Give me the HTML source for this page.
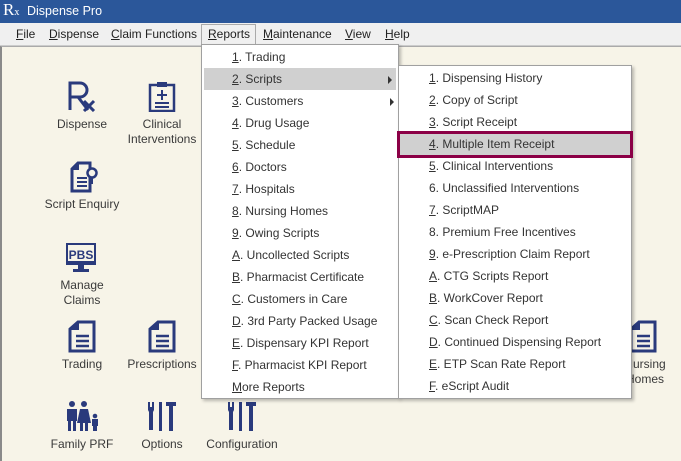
<!DOCTYPE html>
<html><head><style>
*{margin:0;padding:0;box-sizing:border-box}
body{width:681px;height:461px;overflow:hidden;background:#f7f4e8;font-family:"Liberation Sans",sans-serif;font-size:12px;color:#333;position:relative}
.title{position:absolute;left:0;top:0;width:681px;height:23px;background:#2b579a;color:#fff;font-size:12.5px}
.menubar{position:absolute;left:0;top:23px;width:681px;height:23px;background:#f0f0f0;border-bottom:1px solid #ccc}
.mi{position:absolute;top:4px;color:#222}
.content{position:absolute;left:0;top:46px;width:681px;height:415px;border-left:2px solid #8a8a8a;border-top:1px solid #aaa}
.lbl{position:absolute;text-align:center;color:#3a3a3a;line-height:15px;width:100px}
.ic{position:absolute}
.menu{position:absolute;background:#fff;border:1px solid #a0a0a0;box-shadow:2px 2px 3px rgba(0,0,0,.25)}
.it{position:absolute;left:0;height:22px;line-height:22px;color:#333}
.hl{background:#d0d0d0}
u{text-decoration:underline}
.arr{position:absolute;right:4px;top:8px;width:0;height:0;border-top:4px solid transparent;border-bottom:4px solid transparent;border-left:4px solid #333}
</style></head><body>
<div class="title"><span style="position:absolute;left:3px;top:0px;font-size:17px;font-family:'Liberation Serif',serif">R<span style="font-size:10px">x</span></span><span style="position:absolute;left:27px;top:4px">Dispense Pro</span></div>
<div class="menubar">
<span class="mi" style="left:16px"><u>F</u>ile</span>
<span class="mi" style="left:49px"><u>D</u>ispense</span>
<span class="mi" style="left:111px"><u>C</u>laim Functions</span>
<div style="position:absolute;left:201px;top:1px;width:55px;height:23px;border:1px solid #aaa;border-bottom:none;background:#f0f0f0"></div>
<span class="mi" style="left:208px"><u>R</u>eports</span>
<span class="mi" style="left:263px"><u>M</u>aintenance</span>
<span class="mi" style="left:345px"><u>V</u>iew</span>
<span class="mi" style="left:385px"><u>H</u>elp</span>
</div>
<div class="content"></div>

<!-- icons -->
<svg class="ic" style="left:66px;top:80px" width="34" height="32" viewBox="0 0 34 32"><path d="M4 30V3h10a7 7 0 0 1 0 14H4M12 17l10 13M18 21l10 10M28 21l-10 10" fill="none" stroke="#2a3a7c" stroke-width="3"/></svg>
<div class="lbl" style="left:32px;top:117px">Dispense</div>
<svg class="ic" style="left:148px;top:80px" width="28" height="32" viewBox="0 0 28 32"><rect x="2" y="5" width="24" height="26" fill="none" stroke="#2a3a7c" stroke-width="2.5"/><rect x="9" y="2" width="10" height="5" fill="#2a3a7c"/><path d="M14 10v10M9 15h10M7 23h14M7 27h14" stroke="#2a3a7c" stroke-width="2"/></svg>
<div class="lbl" style="left:112px;top:117px">Clinical<br>Interventions</div>
<svg class="ic" style="left:66px;top:161px" width="34" height="32" viewBox="0 0 34 32"><path d="M6 30V8l6-6h12v28z" fill="none" stroke="#2a3a7c" stroke-width="3"/><path d="M6 9h7V2z" fill="#2a3a7c"/><path d="M11 17h10M11 21h10M11 25h10" stroke="#2a3a7c" stroke-width="2"/><circle cx="26" cy="12" r="4.5" fill="#f7f4e8" stroke="#2a3a7c" stroke-width="2.5"/><path d="M26 17v6" stroke="#2a3a7c" stroke-width="2"/></svg>
<div class="lbl" style="left:32px;top:197px">Script Enquiry</div>
<svg class="ic" style="left:64px;top:241px" width="36" height="32" viewBox="0 0 36 32"><rect x="2" y="2" width="30" height="22" fill="#2a3a7c"/><rect x="4" y="4" width="26" height="16" fill="#f7f4e8"/><text x="17" y="18" font-family="Liberation Sans" font-size="12" font-weight="bold" fill="#2a3a7c" text-anchor="middle">PBS</text><rect x="14" y="24" width="6" height="4" fill="#2a3a7c"/><rect x="9" y="28" width="16" height="3" fill="#2a3a7c"/></svg>
<div class="lbl" style="left:32px;top:278px">Manage<br>Claims</div>
<svg class="ic" style="left:68px;top:320px" width="30" height="33" viewBox="0 0 30 33"><path d="M2 31V9l8-7h16v29z" fill="none" stroke="#2a3a7c" stroke-width="3"/><path d="M2 10h9V2z" fill="#2a3a7c"/><path d="M8 16h13M8 21h13M8 26h13" stroke="#2a3a7c" stroke-width="2.5"/></svg>
<div class="lbl" style="left:32px;top:357px">Trading</div>
<svg class="ic" style="left:148px;top:320px" width="30" height="33" viewBox="0 0 30 33"><path d="M2 31V9l8-7h16v29z" fill="none" stroke="#2a3a7c" stroke-width="3"/><path d="M2 10h9V2z" fill="#2a3a7c"/><path d="M8 16h13M8 21h13M8 26h13" stroke="#2a3a7c" stroke-width="2.5"/></svg>
<div class="lbl" style="left:112px;top:357px">Prescriptions</div>
<svg class="ic" style="left:629px;top:320px" width="30" height="33" viewBox="0 0 30 33"><path d="M2 31V9l8-7h16v29z" fill="none" stroke="#2a3a7c" stroke-width="3"/><path d="M2 10h9V2z" fill="#2a3a7c"/><path d="M8 16h13M8 21h13M8 26h13" stroke="#2a3a7c" stroke-width="2.5"/></svg>
<div class="lbl" style="left:595px;top:357px">Nursing<br>Homes</div>
<svg class="ic" style="left:64px;top:400px" width="36" height="32" viewBox="0 0 36 32"><g fill="#2a3a7c"><circle cx="8" cy="4" r="3"/><circle cx="20" cy="4" r="3"/><rect x="3" y="9" width="10" height="12"/><rect x="4" y="20" width="3" height="11"/><rect x="9" y="20" width="3" height="11"/><path d="M16 9h8l3 14h-14z"/><rect x="16" y="22" width="3" height="9"/><rect x="21" y="22" width="3" height="9"/><circle cx="31" cy="16" r="2.3"/><rect x="28" y="19" width="6" height="7"/><rect x="29" y="25" width="4" height="6"/></g></svg>
<div class="lbl" style="left:32px;top:437px">Family PRF</div>
<svg class="ic" style="left:146px;top:400px" width="32" height="32" viewBox="0 0 32 32"><g fill="#2a3a7c"><path d="M2 2h2v5h2V2h2v8l-1 2v18H3V12l-1-2z"/><rect x="13" y="2" width="3" height="29"/><path d="M20 2h10v4h-3v25h-4V6h-3z"/></g></svg>
<div class="lbl" style="left:112px;top:437px">Options</div>
<svg class="ic" style="left:226px;top:400px" width="32" height="32" viewBox="0 0 32 32"><g fill="#2a3a7c"><path d="M2 2h2v5h2V2h2v8l-1 2v18H3V12l-1-2z"/><rect x="13" y="2" width="3" height="29"/><path d="M20 2h10v4h-3v25h-4V6h-3z"/></g></svg>
<div class="lbl" style="left:192px;top:437px">Configuration</div>

<!-- Reports menu -->
<div class="menu" style="left:201px;top:44px;width:198px;height:355px">
<div class="it" style="top:1px;width:196px;padding-left:30px"><u>1</u>. Trading</div>
<div class="it hl" style="top:23px;left:2px;width:192px;padding-left:28px"><u>2</u>. Scripts<span class="arr"></span></div>
<div class="it" style="top:45px;width:196px;padding-left:30px"><u>3</u>. Customers<span class="arr"></span></div>
<div class="it" style="top:67px;padding-left:30px"><u>4</u>. Drug Usage</div>
<div class="it" style="top:89px;padding-left:30px"><u>5</u>. Schedule</div>
<div class="it" style="top:111px;padding-left:30px"><u>6</u>. Doctors</div>
<div class="it" style="top:133px;padding-left:30px"><u>7</u>. Hospitals</div>
<div class="it" style="top:155px;padding-left:30px"><u>8</u>. Nursing Homes</div>
<div class="it" style="top:177px;padding-left:30px"><u>9</u>. Owing Scripts</div>
<div class="it" style="top:199px;padding-left:30px"><u>A</u>. Uncollected Scripts</div>
<div class="it" style="top:221px;padding-left:30px"><u>B</u>. Pharmacist Certificate</div>
<div class="it" style="top:243px;padding-left:30px"><u>C</u>. Customers in Care</div>
<div class="it" style="top:265px;padding-left:30px"><u>D</u>. 3rd Party Packed Usage</div>
<div class="it" style="top:287px;padding-left:30px"><u>E</u>. Dispensary KPI Report</div>
<div class="it" style="top:309px;padding-left:30px"><u>F</u>. Pharmacist KPI Report</div>
<div class="it" style="top:331px;padding-left:30px"><u>M</u>ore Reports</div>
</div>

<!-- Scripts submenu -->
<div class="menu" style="left:398px;top:65px;width:234px;height:334px">
<div class="it" style="top:1px;padding-left:30px"><u>1</u>. Dispensing History</div>
<div class="it" style="top:23px;padding-left:30px"><u>2</u>. Copy of Script</div>
<div class="it" style="top:45px;padding-left:30px"><u>3</u>. Script Receipt</div>
<div class="it hl" style="top:65px;left:-2px;width:236px;height:27px;line-height:21px;border:3px solid #8b0046;padding-left:29px"><u>4</u>. Multiple Item Receipt</div>
<div class="it" style="top:89px;padding-left:30px"><u>5</u>. Clinical Interventions</div>
<div class="it" style="top:111px;padding-left:30px">6. Unclassified Interventions</div>
<div class="it" style="top:133px;padding-left:30px"><u>7</u>. ScriptMAP</div>
<div class="it" style="top:155px;padding-left:30px">8. Premium Free Incentives</div>
<div class="it" style="top:177px;padding-left:30px"><u>9</u>. e-Prescription Claim Report</div>
<div class="it" style="top:199px;padding-left:30px"><u>A</u>. CTG Scripts Report</div>
<div class="it" style="top:221px;padding-left:30px"><u>B</u>. WorkCover Report</div>
<div class="it" style="top:243px;padding-left:30px"><u>C</u>. Scan Check Report</div>
<div class="it" style="top:265px;padding-left:30px"><u>D</u>. Continued Dispensing Report</div>
<div class="it" style="top:287px;padding-left:30px"><u>E</u>. ETP Scan Rate Report</div>
<div class="it" style="top:309px;padding-left:30px"><u>F</u>. eScript Audit</div>
</div>
</body></html>
